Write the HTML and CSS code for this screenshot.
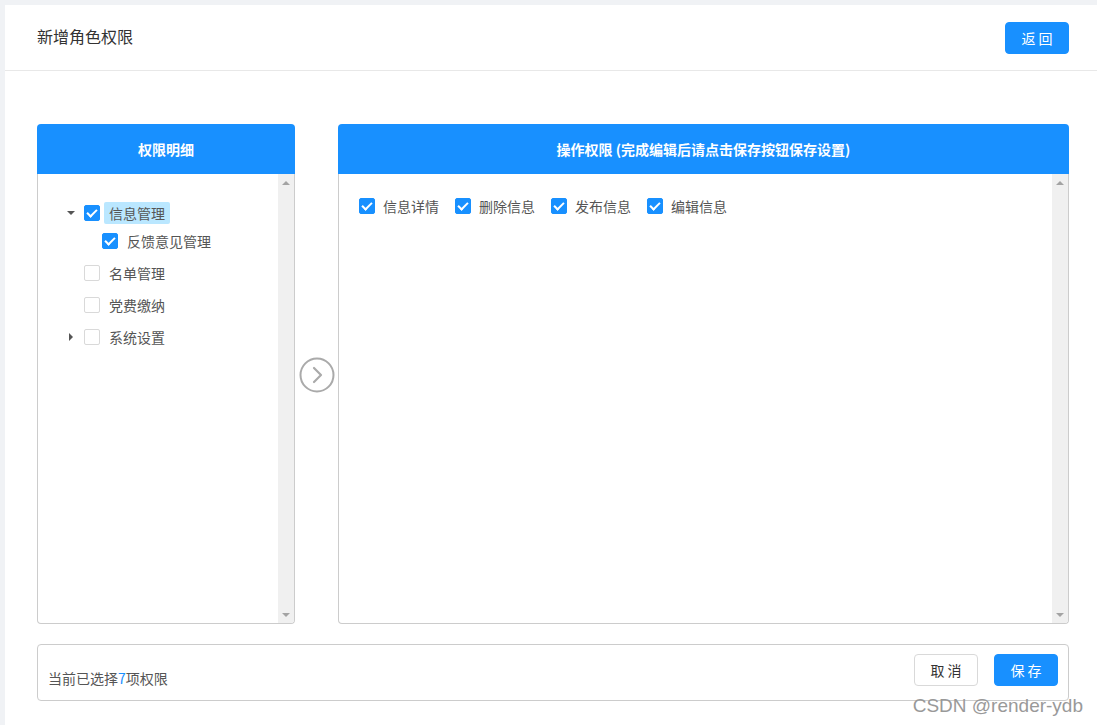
FILE: index.html
```html
<!DOCTYPE html>
<html lang="zh">
<head>
<meta charset="utf-8">
<title>新增角色权限</title>
<link rel="stylesheet" href="styles.css">
</head>
<body>
<div class="page">
  <div class="card">
    <div class="card-header">
      <div class="title">新增角色权限</div>
      <button class="btn btn-primary btn-back">返&nbsp;回</button>
    </div>
    <div class="card-body">
      <div class="panels">
        <div class="panel panel-left">
          <div class="panel-head">权限明细</div>
          <div class="panel-body">
            <div class="panel-content">
              <div class="tree">
                <div class="tree-row first">
                  <span class="caret caret-down"></span>
                  <span class="cb checked"></span>
                  <span class="label selected">信息管理</span>
                </div>
                <div class="tree-row child">
                  <span class="cb checked"></span>
                  <span class="label">反馈意见管理</span>
                </div>
                <div class="tree-row">
                  <span class="caret"></span>
                  <span class="cb"></span>
                  <span class="label">名单管理</span>
                </div>
                <div class="tree-row">
                  <span class="caret"></span>
                  <span class="cb"></span>
                  <span class="label">党费缴纳</span>
                </div>
                <div class="tree-row">
                  <span class="caret caret-right"></span>
                  <span class="cb"></span>
                  <span class="label">系统设置</span>
                </div>
              </div>
            </div>
            <div class="scrollbar">
              <span class="sb-up"></span>
              <span class="sb-down"></span>
            </div>
          </div>
        </div>
        <div class="mid">
          <svg class="arrow-circle" width="36" height="36" viewBox="0 0 36 36">
            <circle cx="18" cy="18" r="16.5" fill="#fff" stroke="#aaaaaa" stroke-width="2"/>
            <path d="M15 11 L22 18 L15 25" fill="none" stroke="#aaaaaa" stroke-width="2.2" stroke-linecap="round" stroke-linejoin="round"/>
          </svg>
        </div>
        <div class="panel panel-right">
          <div class="panel-head">操作权限 (完成编辑后请点击保存按钮保存设置)</div>
          <div class="panel-body">
            <div class="panel-content">
              <div class="ops">
                <div class="op"><span class="cb checked"></span><span class="op-label">信息详情</span></div>
                <div class="op"><span class="cb checked"></span><span class="op-label">删除信息</span></div>
                <div class="op"><span class="cb checked"></span><span class="op-label">发布信息</span></div>
                <div class="op"><span class="cb checked"></span><span class="op-label">编辑信息</span></div>
              </div>
            </div>
            <div class="scrollbar">
              <span class="sb-up"></span>
              <span class="sb-down"></span>
            </div>
          </div>
        </div>
      </div>
      <div class="footer-box">
        <div class="summary">当前已选择<span class="num">7</span>项权限</div>
        <div class="actions">
          <button class="btn btn-default">取&nbsp;消</button>
          <button class="btn btn-primary">保&nbsp;存</button>
        </div>
      </div>
    </div>
  </div>
  <div class="watermark">CSDN @render-ydb</div>
</div>
</body>
</html>
```

FILE: styles.css
```css
* { box-sizing: border-box; }
html, body {
  margin: 0;
  padding: 0;
  background: #f0f2f5;
  font-family: "Noto Sans CJK SC", "Noto Sans", "Liberation Sans", sans-serif;
  color: #333;
}
.page {
  position: relative;
  width: 1097px;
  height: 725px;
  padding: 5px 0 0 5px;
  overflow: hidden;
}
.card {
  background: #fff;
  height: 720px;
}
.card-header {
  height: 66px;
  border-bottom: 1px solid #e8e8e8;
  display: flex;
  align-items: center;
  justify-content: space-between;
  padding: 0 28px 0 32px;
}
.title {
  font-size: 16px;
  color: #333;
  margin-top: -3px;
}
.btn {
  font-family: inherit;
  font-size: 14px;
  height: 32px;
  width: 64px;
  border-radius: 4px;
  border: 1px solid #d9d9d9;
  background: #fff;
  color: #333;
  padding: 0;
  line-height: 30px;
  cursor: pointer;
}
.btn-primary {
  background: #1890ff;
  border-color: #1890ff;
  color: #fff;
}
.btn-back {
  margin-top: 1px;
}
.card-body {
  padding: 53px 28px 0 32px;
}
.panels {
  display: flex;
  height: 500px;
}
.panel {
  display: flex;
  flex-direction: column;
  border-radius: 4px;
}
.panel-left { width: 258px; }
.panel-right { flex: 1; }
.mid {
  width: 43px;
  display: flex;
  align-items: center;
  justify-content: center;
  padding-top: 2px;
}
.panel-head {
  height: 50px;
  background: #1890ff;
  color: #fff;
  font-size: 14px;
  font-weight: bold;
  display: flex;
  align-items: center;
  justify-content: center;
  border-radius: 4px 4px 0 0;
  flex-shrink: 0;
}
.panel-body {
  flex: 1;
  display: flex;
  border: 1px solid #cccccc;
  border-top: none;
  border-radius: 0 0 4px 4px;
  overflow: hidden;
}
.panel-content {
  flex: 1;
}
.scrollbar {
  width: 16px;
  background: #f0f0f0;
  display: flex;
  flex-direction: column;
  justify-content: space-between;
  align-items: center;
  padding: 7px 0 6px;
}
.sb-up {
  width: 0; height: 0;
  border-left: 4px solid transparent;
  border-right: 4px solid transparent;
  border-bottom: 4px solid #a3a3a3;
}
.sb-down {
  width: 0; height: 0;
  border-left: 4px solid transparent;
  border-right: 4px solid transparent;
  border-top: 4px solid #a3a3a3;
}
.tree {
  padding: 28px 0 0 27px;
  font-size: 14px;
  color: #555;
}
.tree-row {
  display: flex;
  align-items: center;
  height: 22px;
  margin-top: 10px;
}
.tree-row.first { margin-top: 0; }
.tree-row.child { margin-top: 6px; padding-left: 37px; }
.caret {
  width: 19px;
  height: 22px;
  position: relative;
  flex-shrink: 0;
}
.caret-down::after {
  content: "";
  position: absolute;
  left: 2px;
  top: 9px;
  border-left: 4px solid transparent;
  border-right: 4px solid transparent;
  border-top: 4px solid #555;
}
.caret-right::after {
  content: "";
  position: absolute;
  left: 4px;
  top: 7px;
  border-top: 4px solid transparent;
  border-bottom: 4px solid transparent;
  border-left: 4px solid #555;
}
.cb {
  width: 16px;
  height: 16px;
  border: 1px solid #d9d9d9;
  border-radius: 2px;
  background: #fff;
  flex-shrink: 0;
  position: relative;
}
.cb.checked {
  background: #1890ff;
  border-color: #1890ff;
}
.cb.checked::after {
  content: "";
  position: absolute;
  left: 4px;
  top: 1px;
  width: 4px;
  height: 8px;
  border-right: 2px solid #fff;
  border-bottom: 2px solid #fff;
  transform: rotate(45deg);
}
.label {
  margin-left: 4px;
  padding: 0 5px;
  height: 22px;
  line-height: 22px;
  border-radius: 2px;
}
.label.selected {
  background: #bae7ff;
}
.ops {
  display: flex;
  padding: 23px 0 0 20px;
  font-size: 14px;
  color: #555;
}
.op {
  display: flex;
  align-items: center;
  margin-right: 16px;
}
.op-label {
  margin-left: 8px;
  line-height: 18px;
}
.footer-box {
  margin-top: 20px;
  height: 57px;
  border: 1px solid #cccccc;
  border-radius: 4px;
  display: flex;
  align-items: center;
  justify-content: space-between;
  padding: 0 10px 0 10px;
}
.summary {
  font-size: 14px;
  color: #555;
  margin-top: 10px;
}
.summary .num { color: #1890ff; }
.actions {
  display: flex;
  gap: 16px;
  margin-top: -6px;
}
.watermark {
  position: absolute;
  right: 14px;
  bottom: 8px;
  font-family: "Liberation Sans", "Noto Sans", sans-serif;
  font-size: 19px;
  color: #999999;
}
```
